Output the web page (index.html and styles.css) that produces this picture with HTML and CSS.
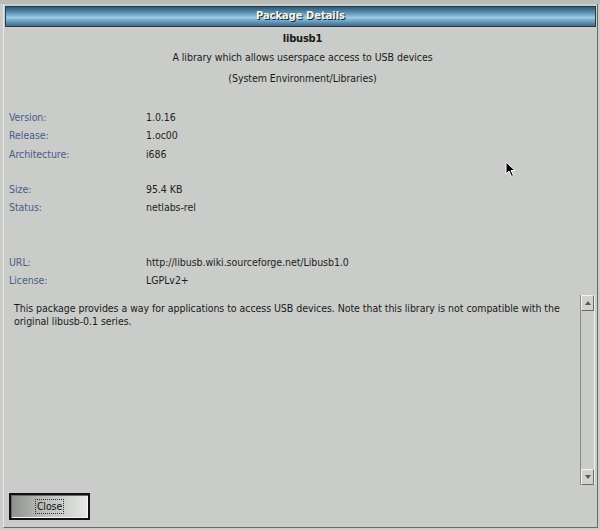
FILE: index.html
```html
<!DOCTYPE html>
<html>
<head>
<meta charset="utf-8">
<link rel="stylesheet" href="styles.css">
</head>
<body>
<div class="screen">
  <div class="topstrip"></div>
  <div class="window">
    <div class="titlebar"><span>Package Details</span></div>
    <div class="content">
      <div class="head">
        <div class="pkgname">libusb1</div>
        <div class="summary">A library which allows userspace access to USB devices</div>
        <div class="group">(System Environment/Libraries)</div>
      </div>
      <div class="props">
        <div class="row"><span class="lbl">Version:</span><span class="val">1.0.16</span></div>
        <div class="row"><span class="lbl">Release:</span><span class="val">1.oc00</span></div>
        <div class="row nudge"><span class="lbl">Architecture:</span><span class="val">i686</span></div>
        <div class="row gap"><span class="lbl">Size:</span><span class="val">95.4 KB</span></div>
        <div class="row"><span class="lbl">Status:</span><span class="val">netlabs-rel</span></div>
        <div class="row gap2"><span class="lbl">URL:</span><span class="val">http://libusb.wiki.sourceforge.net/Libusb1.0</span></div>
        <div class="row"><span class="lbl">License:</span><span class="val">LGPLv2+</span></div>
      </div>
      <div class="descbox">
        <div class="desctext">This package provides a way for applications to access USB devices. Note that this library is not compatible with the original libusb-0.1 series.</div>
        <div class="scrollbar">
          <div class="sbtn up"><svg width="6" height="4" viewBox="0 0 6 4"><path d="M0 4 L3 0 L6 4 Z" fill="#555"/></svg></div>
          <div class="strack"></div>
          <div class="sbtn down"><svg width="6" height="4" viewBox="0 0 6 4"><path d="M0 0 L3 4 L6 0 Z" fill="#555"/></svg></div>
        </div>
      </div>
      <div class="footer">
        <button class="btn"><span class="focus">Close</span></button>
      </div>
    </div>
  </div>
  <svg class="cursor" width="12" height="18" viewBox="0 0 12 18"><path d="M1 1 L1 13 L4 10 L6.5 15.5 L8.5 14.5 L6 9.5 L10 9.5 Z" fill="#000" stroke="#fff" stroke-width="1"/></svg>
</div>
</body>
</html>
```
FILE: styles.css
```css
html, body {
  margin: 0;
  padding: 0;
  background: #c9ccc8;
}
.screen {
  position: relative;
  width: 600px;
  height: 530px;
  overflow: hidden;
  background: #c9ccc8;
  font-family: "DejaVu Sans Condensed", "Liberation Sans Narrow", "Liberation Sans", sans-serif;
  font-size: 10.5px;
  letter-spacing: -0.05px;
  color: #1a1a1a;
  display: flex;
  flex-direction: column;
}
.topstrip {
  height: 4px;
  background: #b9bcb8;
  flex: none;
}
.window {
  flex: 1;
  margin: 0 2px 2px 3px;
  border-left: 1px solid #e8e8e6;
  border-right: 1px solid #6a6a6a;
  border-bottom: 1px solid #6a6a6a;
  display: flex;
  flex-direction: column;
  background: #c9ccc8;
}
.titlebar {
  height: 19px;
  margin: 2px 1px 0 1px;
  border: 1px solid #2a3a48;
  background: linear-gradient(to bottom, #2f5a78 0%, #4a7c9c 20%, #7fb3d2 45%, #9ccbe4 55%, #6c9fc0 75%, #3d6a8a 100%);
  display: flex;
  align-items: center;
  justify-content: center;
}
.titlebar span {
  color: #f4f4e8;
  font-weight: bold;
  font-size: 11px;
  letter-spacing: 0;
  text-shadow: 1px 1px 0 #1a2a38;
  margin-top: -2px;
}
.content {
  flex: 1;
  display: flex;
  flex-direction: column;
  padding: 0 1px 0 5px;
}
.head {
  text-align: center;
  padding-top: 5px;
  display: flex;
  flex-direction: column;
}
.pkgname {
  font-weight: bold;
  font-size: 11px;
  letter-spacing: -0.2px;
  height: 16px;
  line-height: 14px;
}
.summary, .group {
  height: 20px;
  line-height: 20px;
}
.summary {
  margin-top: -1px;
  margin-bottom: 1px;
}
.props {
  padding-top: 20px;
  display: flex;
  flex-direction: column;
}
.row {
  display: flex;
  height: 18px;
  line-height: 18px;
}
.row.nudge { margin-top: 1px; }
.row.gap { margin-top: 17px; }
.row.gap2 { margin-top: 37px; }
.lbl {
  width: 137px;
  color: #4a5b8c;
  flex: none;
}
.val {
  color: #1e1e1e;
}
.descbox {
  margin-top: 6px;
  height: 190px;
  display: flex;
}
.desctext {
  flex: 1;
  padding: 7px 16px 0 5px;
  line-height: 13px;
}
.scrollbar {
  width: 13px;
  margin-right: 1px;
  display: flex;
  flex-direction: column;
  border-left: 1px solid #8a8a8a;
  border-right: 1px solid #f0f0ee;
}
.sbtn {
  height: 14px;
  border: 1px solid;
  border-color: #f2f2f0 #6a6a6a #6a6a6a #f2f2f0;
  background: #cfd2ce;
  display: flex;
  align-items: center;
  justify-content: center;
}
.strack {
  flex: 1;
  background: #c9ccc8;
}
.footer {
  padding: 8px 0 6px 0;
}
.btn {
  width: 81px;
  height: 27px;
  border: 2px solid #111;
  background: linear-gradient(to right, #8e908e 0%, #b9bbb9 40%, #e6e8e6 100%);
  box-shadow: inset 1px 1px 0 #6a6a6a, inset -1px -1px 0 #f4f4f4;
  font-family: inherit;
  font-size: 10.5px;
  letter-spacing: -0.1px;
  color: #111;
  padding: 0;
  display: flex;
  align-items: center;
  justify-content: center;
}
.focus {
  border: 1px dotted #333;
  padding: 0 1px;
  line-height: 13px;
}
.cursor {
  position: absolute;
  left: 505px;
  top: 161px;
}
```
